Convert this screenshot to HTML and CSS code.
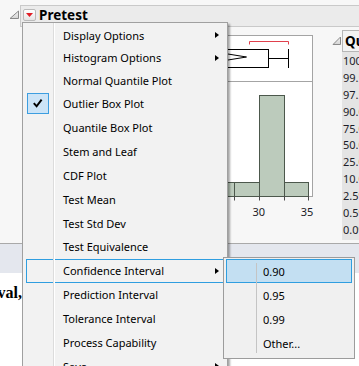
FILE: index.html
```html
<!DOCTYPE html>
<html>
<head>
<meta charset="utf-8">
<link rel="stylesheet" href="styles.css">
</head>
<body>
<div class="page">
  <div class="title-row">
    <svg class="disclose" width="20" height="22" viewBox="0 0 20 22">
      <defs><linearGradient id="g1" x1="0" y1="0" x2="0" y2="1"><stop offset="0" stop-color="#f4f4f4"/><stop offset="1" stop-color="#d4d4d4"/></linearGradient></defs>
      <polygon points="10,13.5 18.5,6 18.5,13.5" fill="url(#g1)" stroke="#8a8a8a" stroke-linejoin="round"/>
    </svg>
    <div class="title-bar">
      <span class="red-btn">
        <svg width="11" height="10" viewBox="0 0 11 10"><polygon points="2,3 9,3 5.5,7" fill="#e01e26"/></svg>
      </span>
      <span class="title">Pretest</span>
    </div>
  </div>

  <div class="content">
    <svg class="plot" width="166" height="192" viewBox="150 30 166 192">
      <rect x="150.5" y="35.5" width="162" height="161" fill="#fff" stroke="#a4a4a4"/>
      <line x1="150" y1="81.5" x2="313" y2="81.5" stroke="#a4a4a4"/>
      <path d="M249.5 44.5V41.5H288.5V44.5" fill="none" stroke="#e0404c"/>
      <rect x="150.5" y="49.5" width="118" height="18" fill="none" stroke="#000"/>
      <path d="M268.5 58.5H288.5M288.5 49V68" fill="none" stroke="#000"/>
      <path d="M200 49.5L246.5 57L200 64.5" fill="none" stroke="#000"/>
      <g fill="#bccbbc" stroke="#4c584c">
        <rect x="210.5" y="182.5" width="24" height="14"/>
        <rect x="234.5" y="182.5" width="25" height="14"/>
        <rect x="259.5" y="95.5" width="25" height="101"/>
        <rect x="284.5" y="182.5" width="24" height="14"/>
      </g>
      <path d="M234.5 196V200.5M259.5 196V200.5M284.5 196V200.5M308.5 196V200.5" stroke="#4c4c4c"/>
      <text class="axis" x="258.8" y="216">30</text>
      <text class="axis" x="307" y="216">35</text>
    </svg>

    <div class="quant">
      <svg class="disclose-sm" width="10" height="22" viewBox="0 0 10 22">
        <defs><linearGradient id="g2" x1="0" y1="0" x2="0" y2="1"><stop offset="0" stop-color="#f4f4f4"/><stop offset="1" stop-color="#d4d4d4"/></linearGradient></defs>
        <polygon points="1,14.5 8.5,7 8.5,14.5" fill="url(#g2)" stroke="#8a8a8a" stroke-linejoin="round"/>
      </svg>
      <div class="qtable">
        <div class="qhead">Quantiles</div>
        <div class="qbody">
          <div class="qrow">100.0%</div>
          <div class="qrow">99.5%</div>
          <div class="qrow">97.5%</div>
          <div class="qrow">90.0%</div>
          <div class="qrow">75.0%</div>
          <div class="qrow">50.0%</div>
          <div class="qrow">25.0%</div>
          <div class="qrow">10.0%</div>
          <div class="qrow">2.5%</div>
          <div class="qrow">0.5%</div>
          <div class="qrow">0.0%</div>
        </div>
      </div>
    </div>
  </div>

  <div class="band"></div>
  <div class="text-area">
    <div class="clip"><span class="sentence">confidence interval,</span></div>
  </div>

  <div class="menu">
    <div class="mi tight"><span class="icon"></span><span class="label">Display Options</span><span class="arrow"></span></div>
    <div class="mi tight"><span class="icon"></span><span class="label">Histogram Options</span><span class="arrow"></span></div>
    <div class="mi tight"><span class="icon"></span><span class="label">Normal Quantile Plot</span></div>
    <div class="mi"><span class="icon checked"><svg width="20" height="19" viewBox="0 0 20 19"><path d="M5.8 9.2L8.6 12.3L13.6 5.6" fill="none" stroke="#000" stroke-width="2"/></svg></span><span class="label">Outlier Box Plot</span></div>
    <div class="mi"><span class="icon"></span><span class="label">Quantile Box Plot</span></div>
    <div class="mi"><span class="icon"></span><span class="label">Stem and Leaf</span></div>
    <div class="mi"><span class="icon"></span><span class="label">CDF Plot</span></div>
    <div class="mi"><span class="icon"></span><span class="label">Test Mean</span></div>
    <div class="mi"><span class="icon"></span><span class="label">Test Std Dev</span></div>
    <div class="mi"><span class="icon"></span><span class="label">Test Equivalence</span></div>
    <div class="mi open"><span class="icon"></span><span class="label">Confidence Interval</span><span class="arrow"></span></div>
    <div class="mi"><span class="icon"></span><span class="label">Prediction Interval</span></div>
    <div class="mi"><span class="icon"></span><span class="label">Tolerance Interval</span></div>
    <div class="mi"><span class="icon"></span><span class="label">Process Capability</span></div>
    <div class="mi"><span class="icon"></span><span class="label">Save</span><span class="arrow"></span></div>
  </div>

  <div class="submenu">
    <div class="si hot">0.90</div>
    <div class="si">0.95</div>
    <div class="si">0.99</div>
    <div class="si">Other...</div>
  </div>
</div>
</body>
</html>
```

FILE: styles.css
```css
* { box-sizing: border-box; }
html, body { margin: 0; padding: 0; }
body {
  width: 359px;
  height: 366px;
  overflow: hidden;
  background: #f7f7f7;
  font-family: "Noto Sans", "Open Sans", sans-serif;
  color: #000;
}
.page {
  position: relative;
  width: 359px;
  height: 366px;
  overflow: hidden;
  background: #f7f7f7;
}

/* report header */
.title-row {
  display: flex;
  margin-top: 5px;
  height: 22px;
}
.disclose { flex: none; }
.title-bar {
  flex: 1;
  display: flex;
  align-items: flex-start;
  background: #ebebeb;
  border: 1px solid #c9c9c9;
  border-right: none;
}
.red-btn {
  flex: none;
  display: flex;
  width: 13px;
  height: 12px;
  margin: 3px 0 0 2px;
  border: 1px solid #bababa;
  border-radius: 2px;
  background: linear-gradient(#ffffff, #e4e4e4);
}
.title {
  margin: 1px 0 0 3px;
  font-weight: 700;
  font-size: 13.5px;
  line-height: 16px;
}

/* report content */
.content {
  display: flex;
  height: 216px;
}
.plot { flex: none; margin: 3px 0 0 150px; }
.axis {
  font-family: "Noto Sans", sans-serif;
  font-size: 11px;
  fill: #1c1c28;
  text-anchor: middle;
}
.quant {
  flex: 1;
  min-width: 0;
  display: flex;
  margin: 3px 0 0 16px;
}
.disclose-sm { flex: none; }
.qtable {
  flex: 1;
  min-width: 0;
  overflow: hidden;
  white-space: nowrap;
}
.qhead {
  height: 22px;
  border: 1px solid #b6b6b6;
  border-right: none;
  background: #f3f3f3;
  font-weight: 700;
  font-size: 13.5px;
  line-height: 20px;
  padding-left: 2px;
}
.qbody {
  height: 188px;
  background: #e4e4e4;
  padding-top: 1px;
  font-size: 11px;
  color: #1c1c28;
}
.qrow {
  height: 16.9px;
  line-height: 16.9px;
  padding-left: 1px;
}

.band {
  height: 30px;
  border-top: 1px solid #a9a9a9;
  background: #e4e7ee;
}
.text-area {
  height: 93px;
  background: #fff;
  padding-top: 11px;
}
.clip {
  width: 22px;
  overflow: hidden;
  display: flex;
  justify-content: flex-end;
}
.sentence {
  flex: none;
  white-space: nowrap;
  font-family: "Liberation Serif", serif;
  font-weight: 700;
  font-size: 16px;
  line-height: 18px;
}

/* context menu */
.menu {
  position: absolute;
  left: 22px;
  top: 22px;
  width: 206px;
  height: 360px;
  border: 1px solid #a0a0a0;
  padding-top: 1px;
  background: #f2f2f2;
  box-shadow: 2px 2px 2px rgba(0, 0, 0, 0.35);
  font-size: 11px;
}
.menu::before {
  content: "";
  position: absolute;
  left: 30px;
  top: 0;
  bottom: 0;
  width: 1px;
  background: #dcdcdc;
  box-shadow: 1px 0 0 #ffffff;
}
.mi {
  display: flex;
  align-items: center;
  height: 23.85px;
  margin: 0 2px 0 3px;
  border: 1px solid transparent;
  white-space: nowrap;
}
.mi.tight { height: 22.67px; }
.mi.open { border-color: #2f9ee0; }
.icon {
  flex: none;
  width: 22px;
  height: 21px;
}
.icon.checked {
  display: flex;
  background: #cce4f7;
  border: 1px solid #3d9ee0;
}
.label { margin-left: 14px; }
.arrow {
  margin-left: auto;
  margin-right: 5px;
  width: 0;
  height: 0;
  border-left: 4px solid #000;
  border-top: 3px solid transparent;
  border-bottom: 3px solid transparent;
}

/* submenu */
.submenu {
  position: absolute;
  left: 223px;
  top: 257px;
  width: 132px;
  height: 102px;
  border: 1px solid #9c9c9c;
  padding-top: 1px;
  background: #f0f0f0;
  font-size: 11px;
}
.submenu::before {
  content: "";
  position: absolute;
  left: 32px;
  top: 5px;
  width: 1px;
  height: 90px;
  background: #c4c4c4;
}
.si {
  display: flex;
  align-items: center;
  height: 24px;
  margin: 0 2px;
  border: 1px solid transparent;
  padding-left: 36px;
  white-space: nowrap;
}
.si.hot {
  background: #c3dff2;
  border-color: #2f9ee0;
}
```
